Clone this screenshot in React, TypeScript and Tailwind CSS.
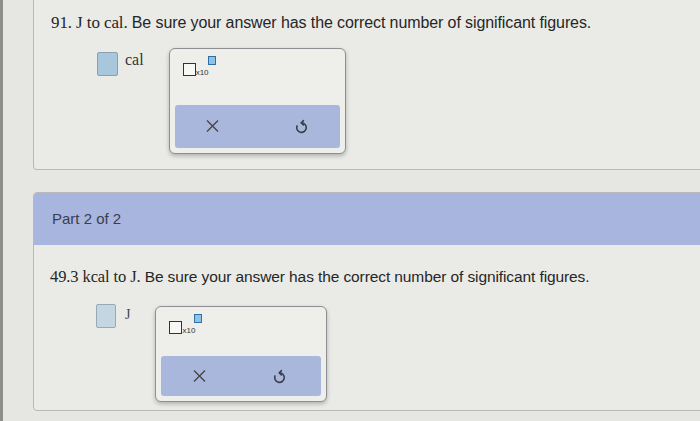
import React from "react";

const sans = { fontFamily: '"Liberation Sans", Arial, sans-serif' };
const serif = { fontFamily: '"Liberation Serif", "Times New Roman", serif' };

function Sci() {
  return (
    <div className="flex items-end">
      <div className="w-[13px] h-[13px] border border-[#333] bg-[#f7f7f5]" />
      <span className="text-[8px] leading-none text-[#333] mb-[-1px]" style={sans}>
        x10
      </span>
      <div className="w-[8px] h-[9px] border border-[#2f6fa8] bg-[#8fc3e6] self-start mt-[-7px] ml-[-1px]" />
    </div>
  );
}

function Undo() {
  return (
    <svg width="15" height="17" viewBox="0 0 14 16" fill="none" stroke="#3b3f4a" strokeWidth="1.5" strokeLinecap="round" strokeLinejoin="round">
      <path d="M2.8 7.9 A4.5 4.5 0 1 0 7 5" />
      <path d="M8.8 3 L6.8 5 L8.8 7" />
    </svg>
  );
}

function Cross() {
  return (
    <svg width="13" height="13" viewBox="0 0 13 13" stroke="#444" strokeWidth="1.3">
      <path d="M1 1 L12 12 M12 1 L1 12" />
    </svg>
  );
}

function Popup({ w, h, barH, xAt, undoAt }: { w: number; h: number; barH: number; xAt: number; undoAt: number }) {
  return (
    <div
      className="rounded-[6px] border border-[#8d8f93] bg-[#eeefeb] shadow-[0_2px_4px_rgba(0,0,0,0.25)] flex flex-col px-[5px] pb-[5px]"
      style={{ width: w, height: h }}
    >
      <div className="flex-1 pl-[8px] pt-[14px]">
        <Sci />
      </div>
      <div className="relative rounded-[3px] bg-[#a9b7dc]" style={{ height: barH }}>
        <div className="absolute top-1/2 -translate-y-1/2" style={{ left: xAt }}>
          <Cross />
        </div>
        <div className="absolute top-1/2 -translate-y-1/2" style={{ left: undoAt }}>
          <Undo />
        </div>
      </div>
    </div>
  );
}

export default function App() {
  return (
    <div className="w-[700px] h-[421px] overflow-hidden bg-[#e6e7e2] flex">
      <div className="w-[3px] bg-[#8e8f8c]" />
      <div className="flex-1 pl-[30px] flex flex-col">
        {/* part 1 */}
        <div className="h-[170px] mr-[-20px] border-x border-b border-[#b9bab8] rounded-b-[4px] bg-[#eaebe7] pl-[17px] pt-[10px]">
          <p className="text-[16px] text-[#262626] tracking-[-0.1px]">
            <span style={serif} className="text-[17px]">91. J to cal. </span>
            <span style={sans}>Be sure your answer has the correct number of significant figures.</span>
          </p>
          <div className="flex mt-[12px] ml-[46px]">
            <div className="w-[21px] h-[24px] mt-[4px] rounded-[2px] border border-[#8aa0b0] bg-[#a8c6dc]" />
            <span style={serif} className="ml-[7px] text-[16px] text-[#333] leading-none mt-[4px]">
              cal
            </span>
            <div className="ml-[25px]">
              <Popup w={177} h={106} barH={43} xAt={31} undoAt={119} />
            </div>
          </div>
        </div>
        {/* part 2 */}
        <div className="mt-[22px] h-[219px] mr-[-20px] border border-[#b9bab8] rounded-[4px] bg-[#eaebe7] overflow-hidden">
          <div className="h-[52px] bg-[#a7b5df] flex items-center pl-[18px]">
            <span style={sans} className="text-[15px] text-[#3a3f4d]">
              Part 2 of 2
            </span>
          </div>
          <div className="pl-[16px] pt-[20px]">
            <p className="text-[15.5px] text-[#262626] tracking-[-0.1px]">
              <span style={serif} className="text-[16.5px]">49.3 kcal to J. </span>
              <span style={sans}>Be sure your answer has the correct number of significant figures.</span>
            </p>
            <div className="flex mt-[12px] ml-[46px]">
              <div className="w-[20px] h-[24px] mt-[2px] rounded-[2px] border border-[#9aa8b2] bg-[#c3d6e2]" />
              <span style={serif} className="ml-[9px] text-[14px] text-[#444] leading-none mt-[6px]">
                J
              </span>
              <div className="ml-[25px] mt-[4px]">
                <Popup w={172} h={96} barH={40} xAt={32} undoAt={111} />
              </div>
            </div>
          </div>
        </div>
      </div>
    </div>
  );
}
